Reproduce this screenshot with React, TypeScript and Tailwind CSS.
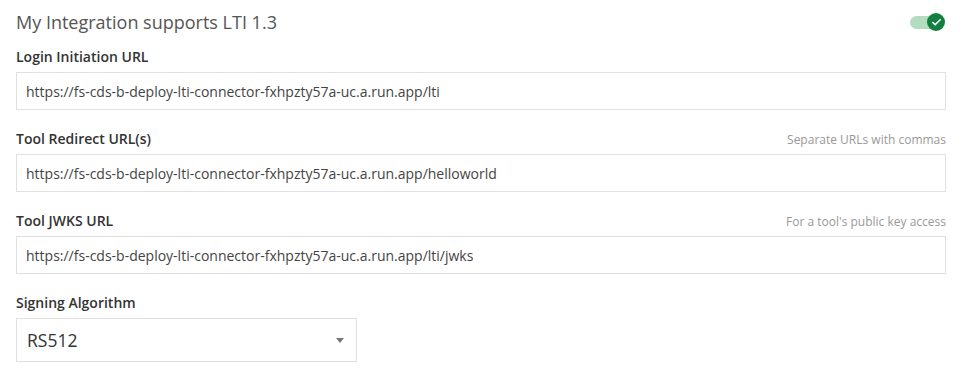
import { Check } from 'lucide-react'

const fields = [
  {
    label: 'Login Initiation URL',
    value: 'https://fs-cds-b-deploy-lti-connector-fxhpzty57a-uc.a.run.app/lti',
  },
  {
    label: 'Tool Redirect URL(s)',
    hint: 'Separate URLs with commas',
    value: 'https://fs-cds-b-deploy-lti-connector-fxhpzty57a-uc.a.run.app/helloworld',
  },
  {
    label: 'Tool JWKS URL',
    hint: "For a tool's public key access",
    value: 'https://fs-cds-b-deploy-lti-connector-fxhpzty57a-uc.a.run.app/lti/jwks',
  },
]

function Toggle() {
  return (
    <div className="relative h-[18px] w-[35px]">
      <div className="absolute left-0 top-[2.5px] h-[13px] w-[30px] rounded-full bg-[#b3dcc1]" />
      <div className="absolute right-0 top-0 flex h-[18px] w-[18px] items-center justify-center rounded-full bg-[#13803f]">
        <Check className="size-[11px] text-white" strokeWidth={3.5} />
      </div>
    </div>
  )
}

export default function App() {
  return (
    <div className="w-[977px] h-[383px] bg-white px-4 pt-[9px] font-['Open_Sans',sans-serif]">
      <div className="flex items-center justify-between pr-[16px]">
        <h2 className="text-[18px] leading-[26px] text-[#555]">My Integration supports LTI 1.3</h2>
        <Toggle />
      </div>

      <div className="flex flex-col gap-[17px] pr-[15px] mt-[10px]">
        {fields.map((f) => (
          <div key={f.label}>
            <div className="flex items-end justify-between h-[22px] mb-[5px]">
              <label className="text-[14px] font-semibold text-[#333]">{f.label}</label>
              {f.hint && <span className="text-[12px] text-[#999]">{f.hint}</span>}
            </div>
            <div className="flex h-[38px] items-center border border-[#e0e0e0] px-[9px] text-[14px] text-[#444]">
              {f.value}
            </div>
          </div>
        ))}

        <div>
          <div className="flex items-end h-[22px] mb-[5px]">
            <label className="text-[14px] font-semibold text-[#333]">Signing Algorithm</label>
          </div>
          <div className="flex h-[44px] w-[341px] items-center justify-between border border-[#e0e0e0] pl-[10px] pr-[12px] text-[17.5px] text-[#333]">
            <span>RS512</span>
            <span className="h-0 w-0 border-x-[4px] border-t-[5px] border-x-transparent border-t-[#777]" />
          </div>
        </div>
      </div>
    </div>
  )
}
